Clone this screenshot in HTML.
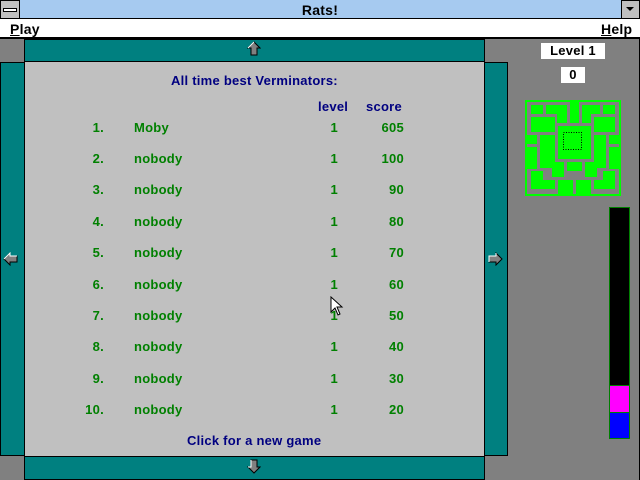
<!DOCTYPE html>
<html><head><style>
*{margin:0;padding:0;box-sizing:border-box}
body{width:640px;height:480px;overflow:hidden;position:relative;background:#808080;font-family:"Liberation Sans",Arial,sans-serif;font-weight:bold;font-size:13px;letter-spacing:0.25px}
.a{position:absolute}
.teal{background:#008080;border:1px solid #000}
.t{position:absolute;white-space:nowrap}
.g{color:#008000}.b{color:#000080}
</style></head><body>
<div class="a" style="left:0;top:0;width:640px;height:19px;background:#a6caf0;border-bottom:1px solid #000"></div>
<div class="a" style="left:0;top:0;width:20px;height:19px;background:#c0c0c0;border:1px solid #000"></div>
<div class="a" style="left:3px;top:8px;width:14px;height:4px;border:1px solid #000;background:#fff"></div>
<div class="t" style="left:0;width:640px;top:2px;text-align:center;font-size:14px;color:#000">Rats!</div>
<div class="a" style="left:621px;top:0;width:19px;height:19px;background:#c0c0c0;border:1px solid #000"></div>
<div class="a" style="left:626px;top:7px;width:0;height:0;border-left:4px solid transparent;border-right:4px solid transparent;border-top:4px solid #000"></div>
<div class="a" style="left:0;top:19px;width:640px;height:20px;background:#fff;border-bottom:2px solid #000"></div>
<div class="t" style="left:10px;top:21px;font-size:14px;color:#000"><u>P</u>lay</div>
<div class="t" style="left:601px;top:21px;font-size:14px;color:#000"><u>H</u>elp</div>
<div class="a" style="left:0;top:39px;width:24px;height:23px;background:#808080"></div>
<div class="a teal" style="left:24px;top:39px;width:461px;height:23px"></div>
<div class="a teal" style="left:0;top:62px;width:25px;height:394px"></div>
<div class="a teal" style="left:484px;top:62px;width:24px;height:394px"></div>
<div class="a teal" style="left:24px;top:456px;width:461px;height:24px"></div>
<div class="a" style="left:0;top:456px;width:24px;height:24px;background:#808080"></div>
<div class="a" style="left:25px;top:62px;width:459px;height:394px;background:#c0c0c0"></div>
<svg class="a" style="left:247px;top:41px" width="14" height="16"><path d="M7 1L1 7H4V14H10V7H13Z" fill="#808080" stroke="#000"/><path d="M7 1L1 7" stroke="#fff"/></svg>
<svg class="a" style="left:247px;top:458px" width="14" height="16"><path d="M7 15L1 9H4V2H10V9H13Z" fill="#808080" stroke="#000"/><path d="M4 2V9H1" stroke="#fff" fill="none"/></svg>
<svg class="a" style="left:3px;top:252px" width="16" height="14"><path d="M1 7L7 1V4H14V10H7V13Z" fill="#808080" stroke="#000"/><path d="M1 7L7 1V4H14" stroke="#fff" fill="none"/></svg>
<svg class="a" style="left:487px;top:252px" width="16" height="14"><path d="M15 7L9 1V4H2V10H9V13Z" fill="#808080" stroke="#000"/><path d="M2 10V4H9V1" stroke="#fff" fill="none"/></svg>
<div class="t b" style="left:171px;top:73px">All time best Verminators:</div>
<div class="t b" style="left:318px;top:99px">level</div>
<div class="t b" style="left:366px;top:99px">score</div>
<div class="t g" style="right:536px;top:120px">1.</div><div class="t g" style="left:134px;top:120px">Moby</div><div class="t g" style="right:302px;top:120px">1</div><div class="t g" style="right:236px;top:120px">605</div>
<div class="t g" style="right:536px;top:151px">2.</div><div class="t g" style="left:134px;top:151px">nobody</div><div class="t g" style="right:302px;top:151px">1</div><div class="t g" style="right:236px;top:151px">100</div>
<div class="t g" style="right:536px;top:182px">3.</div><div class="t g" style="left:134px;top:182px">nobody</div><div class="t g" style="right:302px;top:182px">1</div><div class="t g" style="right:236px;top:182px">90</div>
<div class="t g" style="right:536px;top:214px">4.</div><div class="t g" style="left:134px;top:214px">nobody</div><div class="t g" style="right:302px;top:214px">1</div><div class="t g" style="right:236px;top:214px">80</div>
<div class="t g" style="right:536px;top:245px">5.</div><div class="t g" style="left:134px;top:245px">nobody</div><div class="t g" style="right:302px;top:245px">1</div><div class="t g" style="right:236px;top:245px">70</div>
<div class="t g" style="right:536px;top:277px">6.</div><div class="t g" style="left:134px;top:277px">nobody</div><div class="t g" style="right:302px;top:277px">1</div><div class="t g" style="right:236px;top:277px">60</div>
<div class="t g" style="right:536px;top:308px">7.</div><div class="t g" style="left:134px;top:308px">nobody</div><div class="t g" style="right:302px;top:308px">1</div><div class="t g" style="right:236px;top:308px">50</div>
<div class="t g" style="right:536px;top:339px">8.</div><div class="t g" style="left:134px;top:339px">nobody</div><div class="t g" style="right:302px;top:339px">1</div><div class="t g" style="right:236px;top:339px">40</div>
<div class="t g" style="right:536px;top:371px">9.</div><div class="t g" style="left:134px;top:371px">nobody</div><div class="t g" style="right:302px;top:371px">1</div><div class="t g" style="right:236px;top:371px">30</div>
<div class="t g" style="right:536px;top:402px">10.</div><div class="t g" style="left:134px;top:402px">nobody</div><div class="t g" style="right:302px;top:402px">1</div><div class="t g" style="right:236px;top:402px">20</div>
<div class="t b" style="left:187px;top:433px">Click for a new game</div>
<svg class="a" style="left:330px;top:296px" width="14" height="22"><path d="M1 1V16L5 12L8 19L10 18L7 11H12Z" fill="#fff" stroke="#000"/></svg>
<div class="a" style="left:541px;top:43px;width:64px;height:16px;background:#fff"></div>
<div class="t" style="left:541px;width:64px;top:43px;text-align:center;font-size:13px;color:#000">Level 1</div>
<div class="a" style="left:561px;top:67px;width:24px;height:16px;background:#fff"></div>
<div class="t" style="left:561px;width:24px;top:67px;text-align:center;color:#000">0</div>
<svg class="a" style="left:525px;top:100px" width="96" height="96" viewBox="0 0 96 96">
<rect width="96" height="96" fill="#00ff00"/><rect x="2" y="2" width="92" height="92" fill="#808080"/>
<g fill="#00ff00">
<rect x="6" y="5" width="12" height="9"/><rect x="21" y="5" width="21" height="9"/><rect x="32" y="14" width="10" height="9"/>
<rect x="45" y="2" width="9" height="21"/><rect x="57" y="5" width="18" height="9"/><rect x="57" y="14" width="9" height="9"/>
<rect x="78" y="5" width="12" height="9"/><rect x="6" y="17" width="24" height="15"/><rect x="69" y="17" width="21" height="15"/>
<rect x="33" y="26" width="33" height="33"/><rect x="2" y="35" width="10" height="9"/><rect x="15" y="35" width="15" height="33"/>
<rect x="69" y="35" width="12" height="33"/><rect x="84" y="35" width="10" height="9"/><rect x="2" y="47" width="10" height="22"/>
<rect x="84" y="47" width="10" height="22"/><rect x="42" y="62" width="15" height="9"/><rect x="27" y="62" width="12" height="15"/>
<rect x="60" y="62" width="12" height="15"/><rect x="6" y="71" width="12" height="18"/><rect x="18" y="80" width="12" height="9"/>
<rect x="33" y="80" width="15" height="14"/><rect x="51" y="80" width="15" height="14"/><rect x="69" y="80" width="12" height="9"/><rect x="78" y="71" width="12" height="18"/>
</g>
<rect x="38.5" y="32.5" width="18" height="17" fill="none" stroke="#000" stroke-dasharray="1 1.5"/>
</svg>
<div class="a" style="left:609px;top:207px;width:21px;height:232px;border:1px solid #008000;background:#000"></div>
<div class="a" style="left:610px;top:385px;width:19px;height:27px;background:#ff00ff;border-top:1px solid #008000"></div>
<div class="a" style="left:610px;top:412px;width:19px;height:26px;background:#0000ff;border-top:1px solid #008000"></div>
<div class="a" style="left:639px;top:39px;width:1px;height:441px;background:#000"></div>
</body></html>
